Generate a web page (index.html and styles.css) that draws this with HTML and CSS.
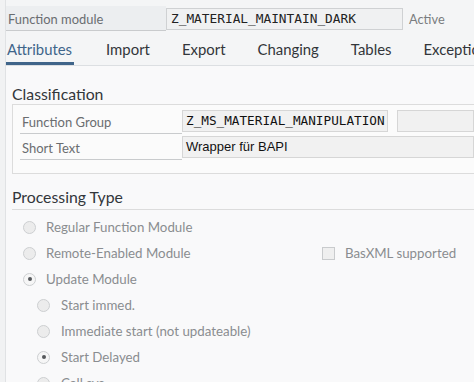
FILE: index.html
```html
<!DOCTYPE html>
<html>
<head>
<meta charset="utf-8">
<link rel="stylesheet" href="styles.css">
</head>
<body>
<div class="page">
  <div class="header">
    <div class="hdr-label">Function module</div>
    <div class="hdr-value mono">Z_MATERIAL_MAINTAIN_DARK</div>
    <div class="hdr-status">Active</div>
  </div>
  <div class="tabs">
    <div class="tab active">Attributes</div>
    <div class="tab">Import</div>
    <div class="tab">Export</div>
    <div class="tab">Changing</div>
    <div class="tab">Tables</div>
    <div class="tab">Exceptions</div>
  </div>
  <div class="content">
    <div class="section-title">Classification</div>
    <div class="group">
      <div class="row">
        <div class="lbl">Function Group</div>
        <div class="fld mono fg">Z_MS_MATERIAL_MANIPULATION</div>
        <div class="fld fg2"></div>
      </div>
      <div class="row">
        <div class="lbl">Short Text</div>
        <div class="fld st">Wrapper für BAPI</div>
      </div>
    </div>
    <div class="section-title pt">Processing Type</div>
    <div class="group2">
      <div class="opt"><span class="radio"></span>Regular Function Module</div>
      <div class="opt"><span class="radio"></span><span class="grow">Remote-Enabled Module</span><span class="cb"></span>BasXML supported</div>
      <div class="opt"><span class="radio on"></span>Update Module</div>
      <div class="sub">
        <div class="opt"><span class="radio"></span>Start immed.</div>
        <div class="opt"><span class="radio"></span>Immediate start (not updateable)</div>
        <div class="opt"><span class="radio on"></span>Start Delayed</div>
        <div class="opt"><span class="radio"></span>Call sys.</div>
      </div>
    </div>
  </div>
</div>
</body>
</html>
```
FILE: styles.css
```css
html, body {
  margin: 0;
  padding: 0;
  overflow: hidden;
}
body {
  width: 474px;
  height: 382px;
  background: #f1f2f3;
  font-family: Lato, "Noto Sans", sans-serif;
}
.page {
  margin-left: 5px;
  border-left: 1px solid #e0e2e4;
  background: #f9f9fa;
  height: 382px;
  white-space: nowrap;
  overflow: hidden;
}
.mono {
  font-family: "DejaVu Sans Mono", "Liberation Mono", monospace;
}
.header {
  display: flex;
  align-items: flex-start;
  padding-top: 6px;
  height: 30px;
  box-sizing: border-box;
  background: #f4f5f6;
}
.hdr-label {
  width: 160px;
  height: 25px;
  line-height: 26px;
  padding-left: 2px;
  background: #eceef0;
  border-bottom: 1px solid #c9cbcd;
  color: #6a6d70;
  font-size: 12.9px;
  box-sizing: border-box;
}
.hdr-value {
  width: 237px;
  height: 22px;
  margin-top: 2px;
  line-height: 20px;
  box-sizing: border-box;
  border: 1px solid #cfd1d3;
  background: #f0f1f2;
  color: #222;
  font-size: 12.8px;
  padding-left: 4px;
}
.hdr-status {
  margin-left: 6px;
  margin-top: 2px;
  line-height: 22px;
  color: #7a7d80;
  font-size: 12.8px;
}
.tabs {
  display: flex;
  height: 36px;
  box-sizing: border-box;
  border-bottom: 1px solid #dcdfe2;
  background: #f4f5f6;
}
.tab {
  font-size: 14.9px;
  color: #32363a;
  line-height: 22px;
  padding-top: 8px;
  margin-right: 32px;
  box-sizing: border-box;
  height: 35px;
}
.tab.active {
  color: #40658a;
  border-bottom: 3px solid #40658a;
  padding-left: 1px;
  padding-right: 2px;
}
.content {
  padding-left: 6px;
  padding-top: 19px;
}
.section-title {
  font-size: 15.8px;
  color: #32363a;
  line-height: 18px;
}
.group {
  margin-top: 1px;
  border: 1px solid #dcdcdc;
  border-right: none;
  background: #fbfbfb;
  padding: 5px 0 11px 7px;
}
.row {
  display: flex;
  height: 24px;
  margin-bottom: 2px;
}
.lbl {
  width: 162px;
  box-sizing: border-box;
  padding-left: 2px;
  border-bottom: 1px solid #c9cbcd;
  color: #6a6d70;
  font-size: 13px;
  line-height: 24px;
}
.fld {
  height: 22px;
  box-sizing: border-box;
  border: 1px solid #d6d6d6;
  background: #f1f1f1;
  line-height: 20px;
  padding-left: 3px;
  color: #111;
}
.fg {
  width: 206px;
  font-size: 12.7px;
}
.fg2 {
  margin-left: 9px;
  flex: 1;
}
.st {
  flex: 1;
  font-family: "Liberation Sans", Arial, sans-serif;
  font-size: 13px;
}
.pt {
  margin-top: 14px;
}
.group2 {
  margin-top: 3px;
  border-top: 1px solid #dcdcdc;
  padding-top: 4px;
}
.opt {
  display: flex;
  align-items: center;
  height: 26px;
  font-size: 13.3px;
  color: #8a8d90;
  padding-left: 11px;
}
.grow {
  width: 276px;
}
.radio {
  width: 13px;
  height: 13px;
  border: 1px solid #cdcfd1;
  border-radius: 50%;
  background: #ececec;
  margin-right: 10px;
  position: relative;
  box-sizing: border-box;
  flex: none;
}
.radio.on {
  background: #f6f6f6;
}
.radio.on::after {
  content: "";
  position: absolute;
  left: 3.5px;
  top: 3.5px;
  width: 4px;
  height: 4px;
  border-radius: 50%;
  background: #55585b;
}
.cb {
  width: 13px;
  height: 13px;
  box-sizing: border-box;
  border: 1px solid #c9cbcd;
  background: #efefef;
  margin-right: 10px;
}
.sub {
  padding-left: 14px;
}
.sub .radio {
  margin-right: 11px;
}
```
